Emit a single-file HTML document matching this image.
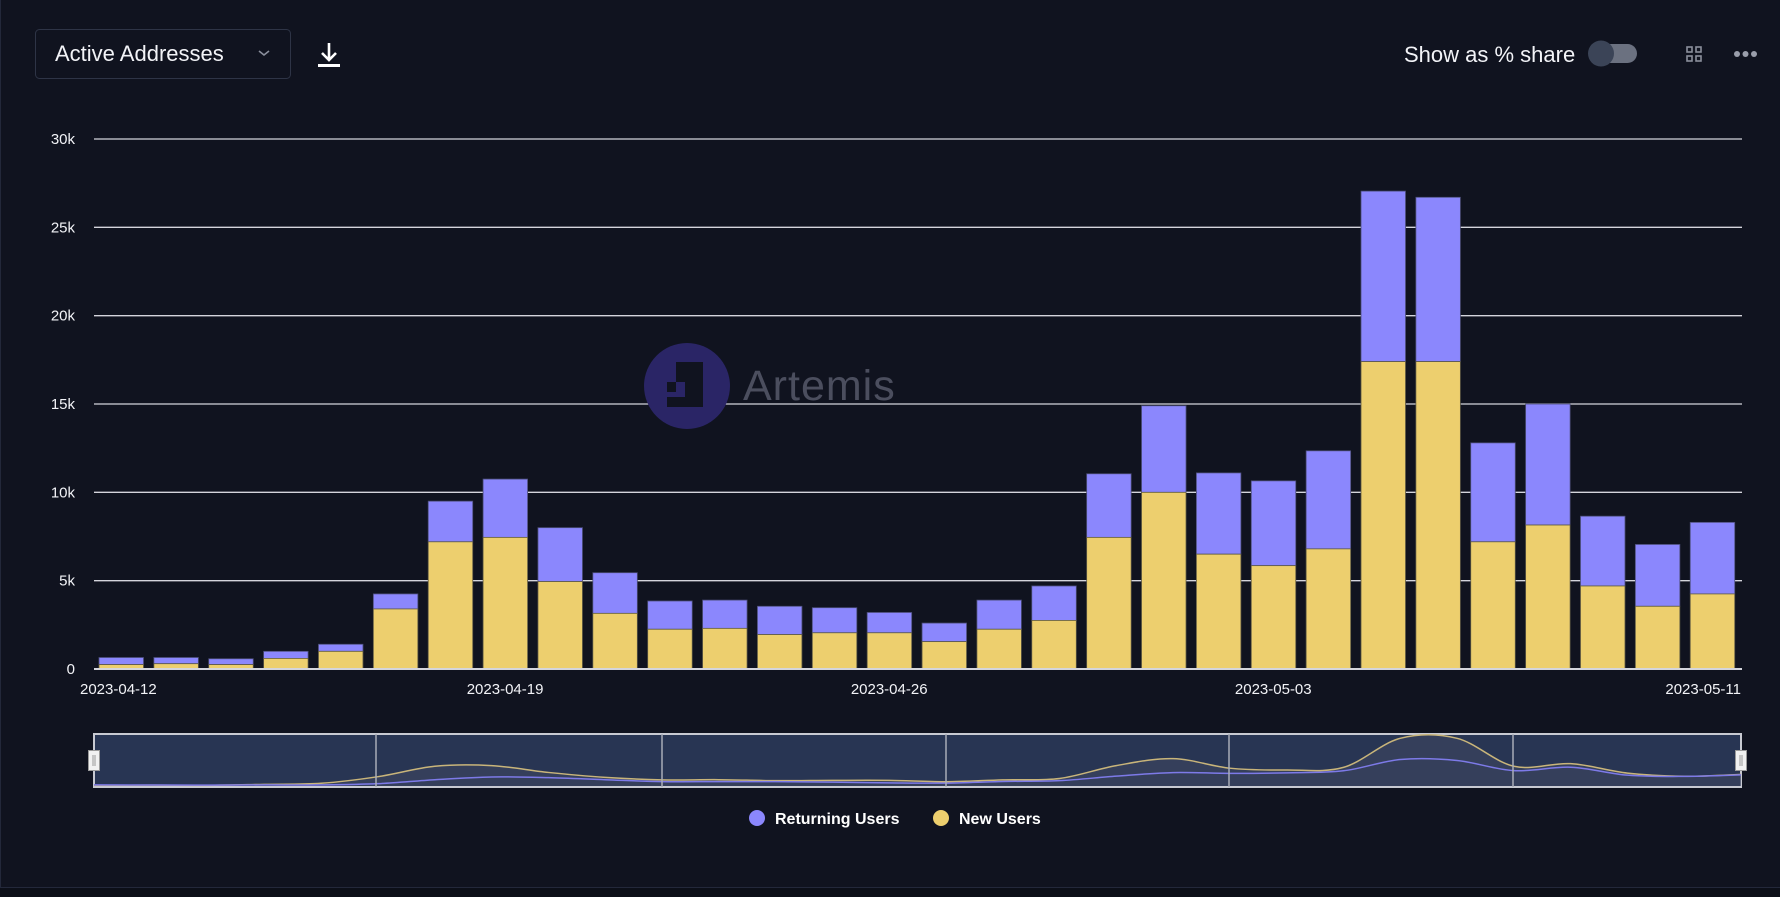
<!DOCTYPE html>
<html><head><meta charset="utf-8"><style>
html,body{margin:0;padding:0;background:#0c0f18;}
body{width:1780px;height:897px;overflow:hidden;position:relative;font-family:"Liberation Sans",Arial,sans-serif;}
#panel{position:absolute;left:0;top:0;width:1780px;height:888px;background:#10131f;border-left:1px solid #23283a;border-bottom:1px solid #23283a;box-sizing:border-box;}
</style></head><body>
<div id="panel"></div>
<svg id="s" width="1780" height="897" style="position:absolute;left:0;top:0" xmlns="http://www.w3.org/2000/svg" font-family="Liberation Sans, Arial, sans-serif">
<rect x="35.5" y="29.5" width="255" height="49" rx="4" fill="#10131f" stroke="#2e3446"/>
<text x="55" y="61" fill="#f2f3f7" font-size="22">Active Addresses</text>
<path d="M259 51 l5 4 l5 -4" stroke="#8a8f9c" stroke-width="1.6" fill="none"/>
<path d="M329 43 v17 M322 53 l7 7 l7 -7" stroke="#fff" stroke-width="2.6" fill="none"/>
<rect x="318" y="64" width="22" height="3" fill="#fff"/>
<text x="1404" y="62" fill="#f2f3f7" font-size="22">Show as % share</text>
<rect x="1590" y="44" width="47" height="19" rx="9.5" fill="#6b7180"/>
<circle cx="1601" cy="53.5" r="13" fill="#3b4457"/>
<g fill="none" stroke="#8a8f9c" stroke-width="1.6"><rect x="1687" y="47" width="5" height="5"/><rect x="1696" y="47" width="5" height="5"/><rect x="1687" y="56" width="5" height="5"/><rect x="1696" y="56" width="5" height="5"/></g>
<g fill="#9a9eab"><circle cx="1737" cy="54" r="3"/><circle cx="1745.5" cy="54" r="3"/><circle cx="1754" cy="54" r="3"/></g>
<g id="chart"></g>
</svg>
<script>
var g=document.getElementById('chart'),h='';
var T=[0.65,0.65,0.58,1.0,1.4,4.25,9.5,10.75,8.0,5.45,3.85,3.9,3.55,3.47,3.2,2.6,3.9,4.7,11.05,14.9,11.1,10.65,12.35,27.05,26.7,12.8,15.0,8.65,7.05,8.3];
var N=[0.25,0.3,0.25,0.6,1.0,3.4,7.2,7.45,4.95,3.15,2.25,2.3,1.95,2.05,2.05,1.55,2.25,2.75,7.45,10.0,6.5,5.85,6.8,17.4,17.4,7.2,8.15,4.7,3.55,4.25];
var y0=669,pk=(669-139)/30;
var labs=['0','5k','10k','15k','20k','25k','30k'];
for(var i=0;i<7;i++){var y=y0-i*5*pk;
 if(i>0)h+='<line x1="94" x2="1742" y1="'+y+'" y2="'+y+'" stroke="#d4d5dc" stroke-width="1.3"/>';
 h+='<text x="75" y="'+(y+5)+'" fill="#f2f3f7" font-size="15" text-anchor="end">'+labs[i]+'</text>';}
h+='<circle cx="687" cy="386" r="43" fill="#2a2566"/>';
h+='<g fill="#10131f"><rect x="685" y="362" width="18" height="45"/><rect x="676" y="362" width="9" height="20"/><rect x="667" y="382" width="9" height="10"/><rect x="667" y="397" width="36" height="10"/></g>';
h+='<text x="743" y="400" fill="#4b4e5e" font-size="43" letter-spacing="1">Artemis</text>';
var bw=54.87;
for(var i=0;i<30;i++){var x=94+i*bw+5,w=44.5;
 var yt=y0-T[i]*pk,yn=y0-N[i]*pk;
 h+='<rect x="'+x+'" y="'+yt+'" width="'+w+'" height="'+(yn-yt)+'" fill="#8b87fd" stroke="#4d4f7a" stroke-width="0.8"/>';
 h+='<rect x="'+x+'" y="'+yn+'" width="'+w+'" height="'+(y0-yn)+'" fill="#edcf6e" stroke="#5f5a44" stroke-width="0.8"/>';}
h+='<line x1="94" x2="1742" y1="669" y2="669" stroke="#d4d5dc" stroke-width="2"/>';
function cx(i){return 94+i*bw+5+22;}
h+='<text x="80" y="694" fill="#f2f3f7" font-size="15">2023-04-12</text>';
[7,14,21].forEach(function(i){h+='<text x="'+cx(i)+'" y="694" fill="#f2f3f7" font-size="15" text-anchor="middle">'+['','2023-04-19','2023-04-26','2023-05-03'][i/7]+'</text>';});
h+='<text x="1741" y="694" fill="#f2f3f7" font-size="15" text-anchor="end">2023-05-11</text>';
h+='<rect x="94" y="734" width="1647" height="53" fill="#283553" stroke="#c8cad2" stroke-width="2"/>';
function path(arr){var pts=arr.map(function(v,i){return [94+i*1647/29,786-v*2.74];});
 var d='M'+pts[0][0]+' '+pts[0][1];
 for(var i=0;i<pts.length-1;i++){var p0=pts[Math.max(i-1,0)],p1=pts[i],p2=pts[i+1],p3=pts[Math.min(i+2,pts.length-1)];
  d+=' C'+(p1[0]+(p2[0]-p0[0])/6)+' '+(p1[1]+(p2[1]-p0[1])/6)+' '+(p2[0]-(p3[0]-p1[0])/6)+' '+(p2[1]-(p3[1]-p1[1])/6)+' '+p2[0]+' '+p2[1];}
 return d;}
var R=T.map(function(t,i){return t-N[i];});
h+='<path d="'+path(N)+' L1741 786 L94 786Z" fill="#3a4560" opacity="0.7"/>';
h+='<path d="'+path(N)+'" stroke="#c9b57a" stroke-width="1.5" fill="none"/>';
h+='<path d="'+path(R)+'" stroke="#7d7ae8" stroke-width="1.5" fill="none"/>';
[376,662,946,1229,1513].forEach(function(x){h+='<line x1="'+x+'" x2="'+x+'" y1="734" y2="787" stroke="#a9adb8" stroke-width="1.5"/>';});
[88,1735].forEach(function(x){h+='<rect x="'+(x+0.5)+'" y="750.5" width="11" height="20" fill="#f1f1f1" stroke="#9a9a9a"/><line x1="'+(x+5)+'" x2="'+(x+5)+'" y1="755" y2="766" stroke="#999"/><line x1="'+(x+7)+'" x2="'+(x+7)+'" y1="755" y2="766" stroke="#999"/>';});
h+='<circle cx="757" cy="818" r="8" fill="#8b87fd"/><text x="775" y="824" fill="#fff" font-size="16" font-weight="bold">Returning Users</text>';
h+='<circle cx="941" cy="818" r="8" fill="#edcf6e"/><text x="959" y="824" fill="#fff" font-size="16" font-weight="bold">New Users</text>';
g.innerHTML=h;
</script>
</body></html>
